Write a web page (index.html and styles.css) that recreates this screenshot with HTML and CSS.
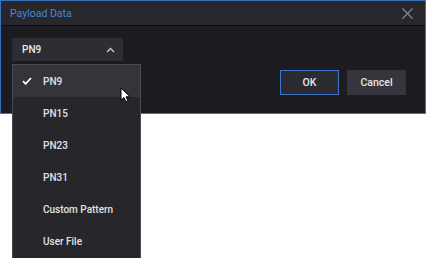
FILE: index.html
```html
<!DOCTYPE html>
<html>
<head>
<meta charset="utf-8">
<link rel="stylesheet" href="styles.css">
</head>
<body>
<div class="dialog">
  <div class="titlebar">
    <span class="title">Payload Data</span>
    <svg class="close" width="11" height="11" viewBox="0 0 11 11"><path d="M0.5 0.5 L10.5 10.5 M10.5 0.5 L0.5 10.5" stroke="#8a8a90" stroke-width="1.1" fill="none"/></svg>
  </div>
  <div class="content">
    <div class="select">
      <span>PN9</span>
      <svg class="chev" width="9" height="6" viewBox="0 0 9 6"><path d="M1 5 L4.5 1.5 L8 5" stroke="#c8c8cc" stroke-width="1.4" fill="none"/></svg>
    </div>
    <div class="buttons">
      <button class="btn ok">OK</button>
      <button class="btn">Cancel</button>
    </div>
  </div>
</div>
<ul class="menu">
  <li class="item active"><svg class="check" width="10" height="8" viewBox="0 0 10 8"><path d="M1 4.2 L3.6 6.8 L9 1" stroke="#ffffff" stroke-width="1.8" fill="none"/></svg>PN9</li>
  <li class="item">PN15</li>
  <li class="item">PN23</li>
  <li class="item">PN31</li>
  <li class="item">Custom Pattern</li>
  <li class="item">User File</li>
</ul>
<svg class="cursor" width="12" height="17" viewBox="0 0 12 17"><path d="M1 1 L1 13 L4 10.5 L6 15 L8 14 L6 9.8 L10 9.8 Z" fill="#ffffff" stroke="#000000" stroke-width="1"/></svg>
</body>
</html>
```
FILE: styles.css
```css
html, body {
  margin: 0;
  padding: 0;
  background: #ffffff;
  font-family: Roboto, "Liberation Sans", sans-serif;
}
body {
  position: relative;
  width: 427px;
  height: 258px;
  overflow: hidden;
}
.dialog {
  width: 424px;
  height: 112px;
  border: 1px solid #3b6fc0;
  background: #1c1c20;
}
.titlebar {
  height: 24px;
  background: #27272c;
  border-bottom: 1px solid #0b0b0d;
  display: flex;
  align-items: center;
  justify-content: space-between;
  padding: 0 12px 0 9px;
}
.title {
  color: #4a86d8;
  font-size: 10.5px;
}
.close {
  display: block;
}
.content {
  position: relative;
  height: 87px;
}
.select {
  position: absolute;
  left: 11px;
  top: 12px;
  width: 111px;
  height: 23px;
  box-sizing: border-box;
  background: #2d2d33;
  display: flex;
  align-items: center;
  justify-content: space-between;
  padding: 0 8px 0 10px;
  color: #ececee;
  font-size: 10px;
  font-weight: 500;
}
.chev { display: block; }
.buttons {
  position: absolute;
  left: 279px;
  top: 44px;
  display: flex;
  gap: 8px;
}
.btn {
  width: 59px;
  height: 25px;
  border: 1px solid transparent;
  background: #35353b;
  color: #e6e6e8;
  font-family: Roboto, "Liberation Sans", sans-serif;
  font-size: 10.5px;
  font-weight: 500;
  padding: 0;
}
.btn.ok {
  background: #2b2b31;
  border-color: #3f74c8;
}
.menu {
  position: absolute;
  left: 12px;
  top: 64px;
  width: 127px;
  margin: 0;
  padding: 0;
  list-style: none;
  background: #26262b;
  border: 1px solid #4a4a50;
  border-bottom: none;
  height: 200px;
}
.item {
  height: 32px;
  display: flex;
  align-items: center;
  padding-left: 30px;
  color: #e2e2e4;
  font-size: 10px;
  font-weight: 500;
  position: relative;
}
.item.active {
  background: #34343b;
}
.check {
  position: absolute;
  left: 9px;
  top: 12px;
}
.cursor {
  position: absolute;
  left: 120px;
  top: 87px;
}
```
